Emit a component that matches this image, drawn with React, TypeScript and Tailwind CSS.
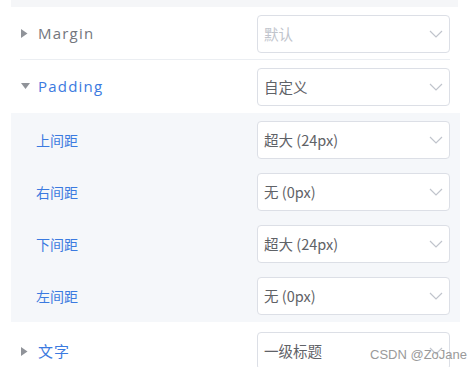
import React from "react";

const cjk = { fontFamily: '"Noto Sans CJK SC", "Noto Sans", sans-serif' };
const lat = { fontFamily: '"Open Sans", "Noto Sans CJK SC", sans-serif' };

function Chevron() {
  return (
    <svg width="14" height="8" viewBox="0 0 14 8" className="shrink-0">
      <path d="M1 1 L7 7 L13 1" fill="none" stroke="#c0c4cc" strokeWidth="1.2" />
    </svg>
  );
}

function Select({ value, placeholder }: { value: string; placeholder?: boolean }) {
  return (
    <div className="w-[193px] h-[38px] rounded-[4px] border border-[#dcdfe6] bg-white flex items-center justify-between pl-[6px] pr-[6px]">
      <span
        className={`text-[14.5px] ${placeholder ? "text-[#c0c4cc]" : "text-[#5f6267]"}`}
        style={cjk}
      >
        {value}
      </span>
      <Chevron />
    </div>
  );
}

function Arrow({ down }: { down?: boolean }) {
  return down ? (
    <svg width="9" height="7" viewBox="0 0 9 7" className="mr-[8px]">
      <path d="M0 0 L9 0 L4.5 6 Z" fill="#909399" />
    </svg>
  ) : (
    <svg width="7" height="9" viewBox="0 0 7 9" className="mr-[10px]">
      <path d="M0 0 L6.5 4.5 L0 9 Z" fill="#909399" />
    </svg>
  );
}

export default function App() {
  return (
    <div className="w-[474px] h-[367px] bg-white relative overflow-hidden">
      <div className="ml-[11px] w-[447px] h-[7px] bg-[#f5f6f8]" />
      <div className="ml-[11px] w-[449px]">
        <div className="h-[53px] flex items-center justify-between pl-[10px] pr-[10px] relative">
          <div className="flex items-center">
            <Arrow />
            <span className="text-[15px] tracking-[1.2px] text-[#73767d]" style={lat}>
              Margin
            </span>
          </div>
          <Select value="默认" placeholder />
          <div className="absolute left-[9px] right-[10px] bottom-0 h-px bg-[#ebeef2]" />
        </div>
        <div className="h-[53px] flex items-center justify-between pl-[10px] pr-[10px]">
          <div className="flex items-center">
            <Arrow down />
            <span className="text-[15px] tracking-[1.2px] text-[#3b7ae0]" style={lat}>
              Padding
            </span>
          </div>
          <Select value="自定义" />
        </div>
        <div className="bg-[#f5f7fa] pt-[1px]">
          {[
            ["上间距", "超大 (24px)"],
            ["右间距", "无 (0px)"],
            ["下间距", "超大 (24px)"],
            ["左间距", "无 (0px)"],
          ].map(([l, v]) => (
            <div key={l} className="h-[52px] flex items-center justify-between pl-[25px] pr-[10px]">
              <span className="text-[14px] text-[#3b7ae0]" style={cjk}>
                {l}
              </span>
              <Select value={v} />
            </div>
          ))}
        </div>
        <div className="flex justify-between pl-[10px] pr-[10px] pt-[10px]">
          <div className="flex items-center h-[38px]">
            <Arrow />
            <span className="text-[15px] tracking-[1px] text-[#3b7ae0]" style={cjk}>
              文字
            </span>
          </div>
          <Select value="一级标题" />
        </div>
      </div>
      <div
        className="absolute left-[370px] top-[346px] whitespace-nowrap text-[13px] leading-[17px] text-[#9a9a9a]"
        style={{ fontFamily: '"Liberation Sans", sans-serif' }}
      >
        CSDN @ZoJane
      </div>
    </div>
  );
}
